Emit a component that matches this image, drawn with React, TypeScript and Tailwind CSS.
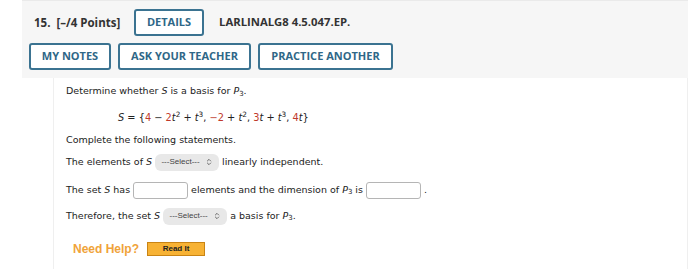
import React from 'react';
import { ChevronsUpDown } from 'lucide-react';

const head = { fontFamily: '"Open Sans", "Liberation Sans", sans-serif' };
const body = { fontFamily: '"DejaVu Sans", Verdana, sans-serif' };

function HeadButton({ label, className = '' }: { label: string; className?: string }) {
  return (
    <div
      className={`flex h-[27px] shrink-0 items-center justify-center rounded-[3px] border-2 border-[#3b7391] bg-white text-[11px] font-bold text-[#2f6787] ${className}`}
    >
      {label}
    </div>
  );
}

function Select() {
  return (
    <span
      className="mx-[3px] inline-flex h-[17px] w-[64px] items-center justify-center gap-[5px] rounded-[6px] bg-[#e8e8e8] align-middle text-[8px] text-[#444]"
      style={{ fontFamily: '"Liberation Sans", Arial, sans-serif' }}
    >
      ---Select---
      <ChevronsUpDown className="h-[8px] w-[8px] text-[#555]" strokeWidth={2.5} />
    </span>
  );
}

function Blank() {
  return <span className="mx-[3px] inline-block h-[17px] w-[55px] rounded-[3px] border border-[#b5b5b5] bg-white align-middle" />;
}

const P3 = () => (
  <>
    <i>P</i>
    <sub className="text-[7px]">3</sub>
  </>
);

const Red = ({ children }: { children: React.ReactNode }) => <span className="text-[#c0392b]">{children}</span>;

export default function App() {
  return (
    <div className="h-[269px] w-[700px] overflow-hidden bg-white">
      <div className="ml-[22px] w-[666px]">
        <div className="h-[78px] border-t border-[#eaeaea] bg-[#f6f6f6] pt-[8px]" style={head}>
          <div className="flex items-center pl-[12px]">
            <span className="w-[100px] shrink-0 text-[11.5px] font-bold text-[#333]">15.&nbsp; [–/4 Points]</span>
            <HeadButton label="DETAILS" className="w-[70px]" />
            <span className="ml-[15px] text-[11.3px] font-bold text-[#333]">LARLINALG8 4.5.047.EP.</span>
          </div>
          <div className="mt-[7px] flex gap-[7px] pl-[7px]">
            <HeadButton label="MY NOTES" className="w-[82px]" />
            <HeadButton label="ASK YOUR TEACHER" className="w-[133px]" />
            <HeadButton label="PRACTICE ANOTHER" className="w-[135px]" />
          </div>
        </div>
        <div className="ml-[31px] h-[191px] border-x border-[#efefef] pl-[12px] text-[9.5px] text-[#222]" style={body}>
          <p className="pt-[6px] leading-[13px]">
            Determine whether <i>S</i> is a basis for <P3 />.
          </p>
          <p className="mt-[14px] pl-[52px] text-[9.8px] leading-[13px]">
            <i>S</i> = {'{'}
            <Red>4</Red> − <Red>2</Red>
            <i>t</i>
            <sup>2</sup> + <i>t</i>
            <sup>3</sup>, <Red>−2</Red> + <i>t</i>
            <sup>2</sup>, <Red>3</Red>
            <i>t</i> + <i>t</i>
            <sup>3</sup>, <Red>4</Red>
            <i>t</i>
            {'}'}
          </p>
          <p className="mt-[9px] leading-[13px]">Complete the following statements.</p>
          <div className="mt-[6px] flex h-[20px] items-center">
            The elements of&nbsp;<i>S</i>
            <Select />
            linearly independent.
          </div>
          <div className="mt-[8px] flex h-[20px] items-center">
            The set&nbsp;<i>S</i>&nbsp;has
            <Blank />
            elements and the dimension of&nbsp;<P3 />&nbsp;is
            <Blank />
            .
          </div>
          <div className="mt-[6px] flex h-[20px] items-center">
            Therefore, the set&nbsp;<i>S</i>
            <Select />
            a basis for&nbsp;<P3 />.
          </div>
          <div className="mt-[14px] flex items-center pl-[7px]" style={{ fontFamily: '"Liberation Sans", Arial, sans-serif' }}>
            <span className="text-[12px] font-bold text-[#f0a33a]">Need Help?</span>
            <span className="ml-[8px] flex h-[14px] w-[58px] items-center justify-center border border-[#c98414] bg-[#f7b234] text-[8px] font-bold text-[#222]">
              Read It
            </span>
          </div>
        </div>
      </div>
    </div>
  );
}
